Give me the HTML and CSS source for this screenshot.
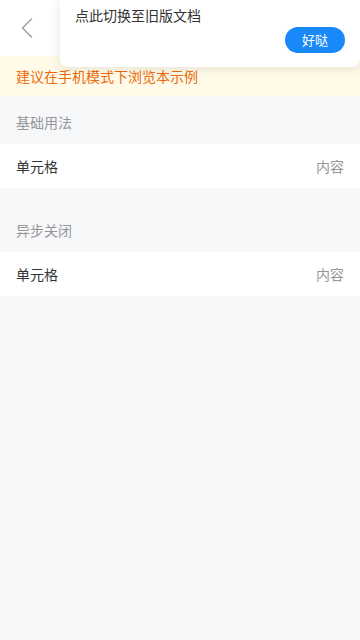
FILE: index.html
```html
<!DOCTYPE html>
<html lang="zh-CN">
<head>
<meta charset="utf-8">
<meta name="viewport" content="width=device-width, initial-scale=1">
<link rel="stylesheet" href="styles.css">
</head>
<body>
<div class="page">
  <header class="nav">
    <span class="back">
      <svg width="12" height="20" viewBox="0 0 12 20"><path d="M10.5 1 L1.5 10 L10.5 19" fill="none" stroke="#a0a1a3" stroke-width="1.5" stroke-linecap="round" stroke-linejoin="round"/></svg>
    </span>
  </header>
  <div class="notice">建议在手机模式下浏览本示例</div>
  <h2 class="block-title first">基础用法</h2>
  <div class="cell"><span class="cell-title">单元格</span><span class="cell-value">内容</span></div>
  <h2 class="block-title">异步关闭</h2>
  <div class="cell"><span class="cell-title">单元格</span><span class="cell-value">内容</span></div>
  <div class="popover">
    <div class="pop-text">点此切换至旧版文档</div>
    <div class="pop-actions"><button class="pop-btn">好哒</button></div>
  </div>
</div>
</body>
</html>
```
FILE: styles.css
```css
* { box-sizing: border-box; }
html, body { margin: 0; padding: 0; }
body {
  background: #f7f8fa;
  font-family: "Noto Sans CJK SC", "Noto Sans", sans-serif;
  font-size: 14px;
  color: #323233;
  min-height: 640px;
}
.page { position: relative; min-height: 640px; }
.nav {
  height: 56px;
  background: #fff;
  display: flex;
  align-items: center;
  padding-left: 21px;
}
.back { display: flex; align-items: center; height: 20px; }
.notice {
  height: 40px;
  background: #fffbe8;
  color: #ed6a0c;
  display: flex;
  align-items: center;
  padding: 0 16px;
  line-height: 24px;
}
.block-title {
  margin: 0;
  padding: 34px 16px 14px;
  font-size: 14px;
  font-weight: normal;
  line-height: 16px;
  color: #969799;
}
.block-title.first { padding-top: 18px; }
.cell {
  background: #fff;
  height: 44px;
  padding: 10px 16px;
  display: flex;
  justify-content: space-between;
  align-items: center;
  line-height: 24px;
}
.cell-title { color: #323233; }
.cell-value { color: #969799; }
.popover {
  position: absolute;
  top: 0;
  left: 60px;
  right: 0;
  height: 67px;
  background: #fff;
  border-radius: 0 0 8px 8px;
  box-shadow: 0 2px 12px rgba(50, 50, 51, 0.12);
  padding: 5px 15px 0;
}
.pop-text { line-height: 20px; color: #323233; }
.pop-actions { display: flex; justify-content: flex-end; margin-top: 2px; }
.pop-btn {
  width: 60px;
  height: 26px;
  border: none;
  border-radius: 13px;
  background: #1989fa;
  color: #fff;
  font-family: inherit;
  font-size: 13px;
  padding: 0;
  line-height: 26px;
}
```
